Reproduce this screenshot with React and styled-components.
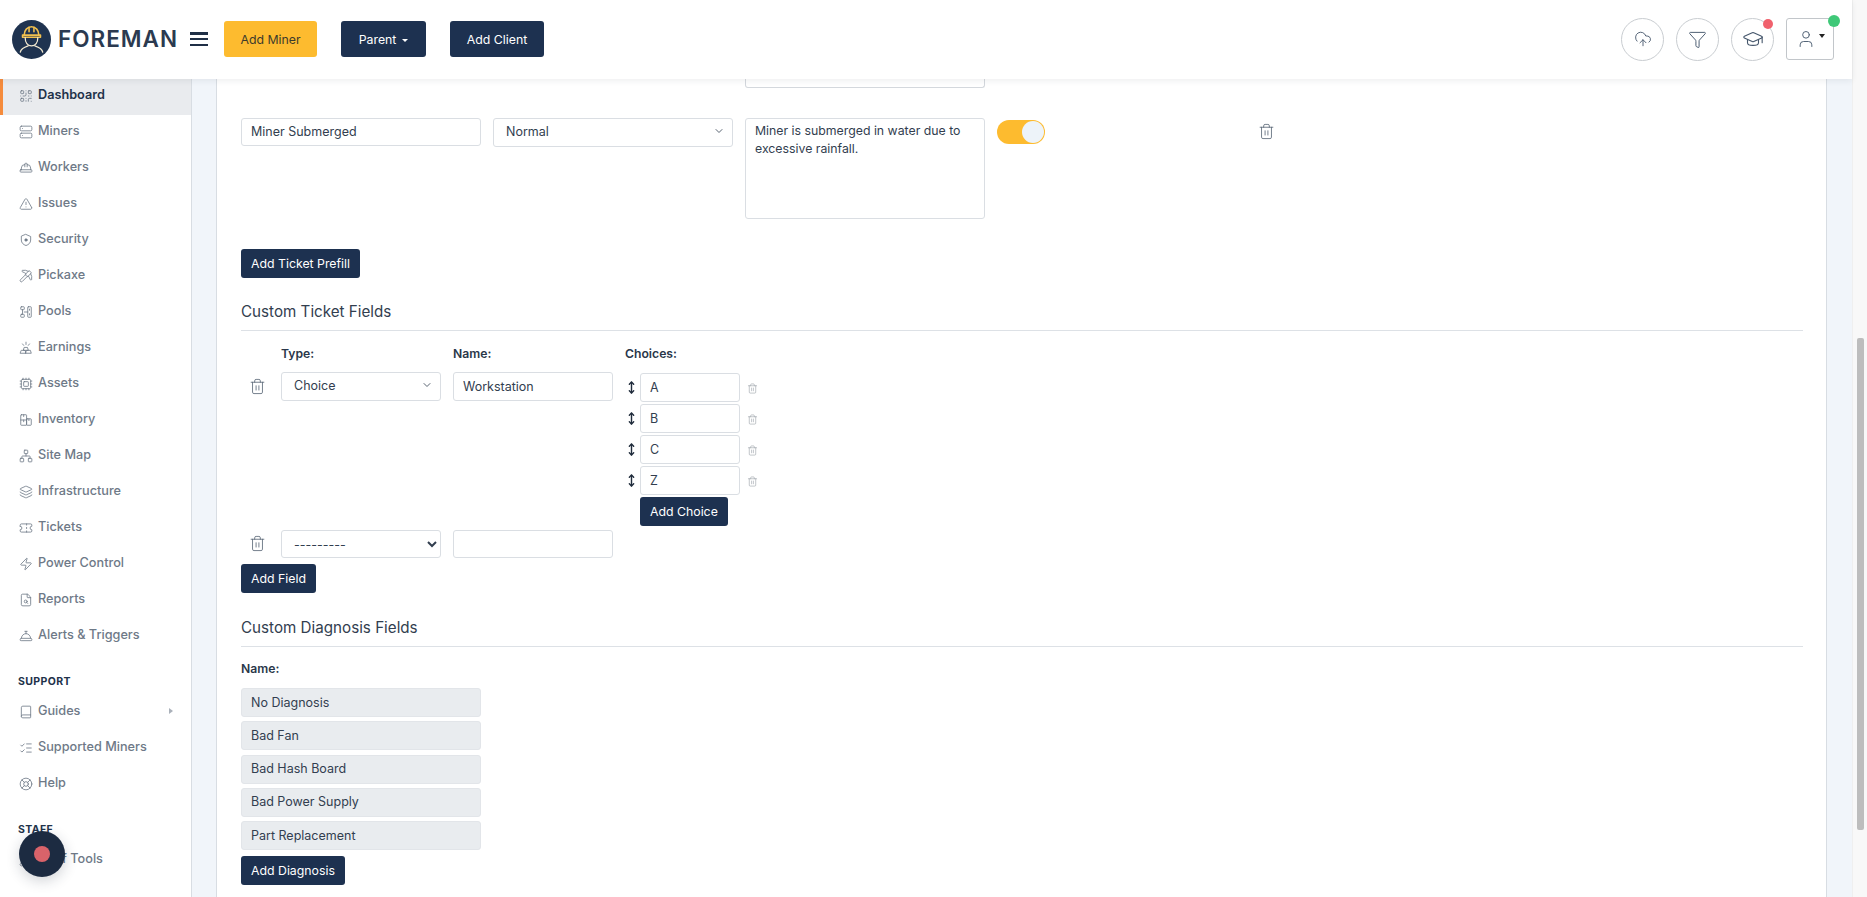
import React from 'react';
import styled, { createGlobalStyle } from 'styled-components';
import {
  QrCode, Server, HardHat, TriangleAlert, Pickaxe, Cpu,
  Network, Layers, Ticket, Zap, FileSearch, ConciergeBell, Book, ListChecks, LifeBuoy,
  CloudUpload, Funnel, GraduationCap, User, Trash2, MoveVertical, ChevronDown, Wrench,
} from 'lucide-react';

const Global = createGlobalStyle`
  html, body { margin: 0; height: 100%; overflow: hidden; background: #fff; }
  body { font-family: Inter, "Noto Sans", "Liberation Sans", sans-serif; font-size: 13px; color: #323e4f; }
  #root { height: 100%; }
  * { box-sizing: border-box; }
`;

const Page = styled.div`display: flex; width: 100%; height: 100vh; overflow: hidden; position: relative;`;
const Shell = styled.div`flex: 1; min-width: 0; display: flex; flex-direction: column;`;
const Track = styled.div`width: 15px; background: #f8f8f8; border-left: 1px solid #efefef; padding: 338px 3px 0 4px;`;
const Thumb = styled.div`height: 492px; background: #bdbdbd; border-radius: 2px;`;

const Header = styled.header`
  height: 79px; flex: none; display: flex; align-items: center; padding: 0 18px 1px 12px;
  background: #fff; box-shadow: 0 2px 6px rgba(40, 50, 70, .08); position: relative; z-index: 2;
`;
const Brand = styled.div`display: flex; align-items: center; gap: 7px;`;
const BrandName = styled.span`font-size: 22.5px; font-weight: 600; letter-spacing: 1px; color: #2b3a50; line-height: 1;`;
const Burger = styled.button`
  border: 0; background: none; padding: 0; margin: 0 16px 0 12px; width: 18px; height: 14px; color: #1f2f46;
  display: flex; flex-direction: column; justify-content: space-between;
`;
const BurgerBar = styled.span`display: block; height: 2.5px; background: currentColor;`;
const HeadButton = styled.button`
  height: 36px; width: ${p => p.$w}px; margin-right: 24px; border: 0; border-radius: 3px; padding: 0;
  background: ${p => (p.$yellow ? '#fdbb2f' : '#1d3150')}; color: ${p => (p.$yellow ? '#3c3a2c' : '#fff')};
  font: 400 12.3px Inter, sans-serif; display: flex; align-items: center; justify-content: center; gap: 6px;
`;
const Caret = styled.i`
  width: 0; height: 0; border-left: 3px solid transparent; border-right: 3px solid transparent;
  border-top: 3.5px solid #fff; margin-top: 2px;
`;
const UserCaret = styled.i`
  width: 0; height: 0; border-left: 3.5px solid transparent; border-right: 3.5px solid transparent;
  border-top: 4px solid #222; margin-top: -6px;
`;
const Tools = styled.div`margin-left: auto; display: flex; align-items: center; gap: 12px;`;
const RoundTool = styled.div`
  width: 43px; height: 43px; border-radius: 50%; border: 1px solid #c9cdd1; position: relative;
  display: flex; align-items: center; justify-content: center; color: #45566b;
`;
const UserTool = styled.div`
  width: 48px; height: 42px; border-radius: 3px; border: 1px solid #c2c6ca; position: relative;
  display: flex; align-items: center; justify-content: center; gap: 3px; color: #45566b; margin-top: -1px;
`;
const Dot = styled.span`
  position: absolute; border-radius: 50%; background: ${p => p.$c}; width: ${p => p.$s}px; height: ${p => p.$s}px;
  top: ${p => p.$t}px; right: ${p => p.$r}px;
`;

const Body = styled.div`flex: 1; min-height: 0; display: flex;`;
const Side = styled.nav`width: 192px; flex: none; background: #fff; border-right: 1px solid #d8dde3; overflow: hidden;`;
const Item = styled.a`
  height: 36px; display: flex; align-items: center; gap: 5px; padding: 0 0 4px 19px; position: relative;
  font-size: 12.7px; line-height: 1; font-weight: ${p => (p.$active ? 600 : 500)};
  color: ${p => (p.$active ? '#22324a' : '#6e7987')};
  background: ${p => (p.$active ? '#e9ebee' : 'transparent')};
  box-shadow: ${p => (p.$active ? 'inset 3px 0 0 #f58b3c' : 'none')};
  svg { flex: none; color: #6e7987; margin-top: 2px; }
`;
const SideHead = styled.div`
  height: 40px; padding: 20px 0 0 18px; font-size: 10.5px; line-height: 14px; font-weight: 700; letter-spacing: .4px; color: #22324a;
`;
const SubCaret = styled.i`
  margin-left: auto; margin-right: 18px; width: 0; height: 0; border-top: 3px solid transparent; border-bottom: 3px solid transparent;
  border-left: 4px solid #aab1ba;
`;
const RecButton = styled.div`
  position: absolute; left: 19px; top: 831px; width: 46px; height: 46px; border-radius: 50%; background: #1c2b41;
  box-shadow: 0 4px 14px rgba(30, 40, 60, .2); display: flex; align-items: center; justify-content: center;
`;
const RecDot = styled.span`width: 16px; height: 16px; border-radius: 50%; background: #d9636a;`;

const Main = styled.main`flex: 1; min-width: 0; background: #f1f5fa; padding: 0 25px 0 24px; overflow: hidden;`;
const Card = styled.section`
  height: 100%; background: #fff; border: solid #d8dde3; border-width: 0 1px; padding: 0 23px 0 24px; overflow: hidden;
`;
const PrefillGrid = styled.div`
  display: grid; grid-template-columns: 240px 240px 240px 249px auto; column-gap: 12px; align-items: start;
  justify-content: start; margin-top: ${p => p.$mt || 0}px;
`;
const field = `
  font: 400 12.5px Inter, sans-serif; color: #323e4f; background: #fff; border: 1px solid #dadee3; border-radius: 3px;
  outline: none; width: 100%; display: block;
`;
const Stub = styled.div`
  grid-column: 3; height: 9px; border: 1px solid #d4d8dd; border-top: 0; border-radius: 0 0 3px 3px;
`;
const TextInput = styled.input`${field} height: ${p => p.$h || 29}px; padding: 0 9px 1px;`;
const Area = styled.textarea`${field} font-size: 12.3px; height: 101px; padding: 3px 9px; line-height: 18px; resize: none; overflow: hidden;`;
const SelectWrap = styled.div`position: relative; color: #5a6573; svg { position: absolute; right: 8px; top: 7px; pointer-events: none; }`;
const PlainSelect = styled.select`${field} height: 29px; padding: 0 12px 2px; appearance: none;`;
const NativeSelect = styled.select`${field} height: 28px; padding: 0 8px;`;
const Toggle = styled.div`
  width: 48px; height: 24px; border-radius: 12px; background: #fdbb2f; margin-top: 2px; display: flex; justify-content: flex-end; padding: 1px;
`;
const Knob = styled.span`width: 22px; height: 22px; border-radius: 50%; background: #edf3f9;`;
const TrashCell = styled.div`color: #5d6a7a; display: flex; padding-top: ${p => p.$pt || 0}px; margin-left: ${p => p.$ml || 0}px;`;

const Btn = styled.button`
  height: 29px; border: 0; border-radius: 3px; background: #1d3150; color: #fff; padding: 0 10px; display: block; white-space: nowrap;
  align-self: flex-start; font: 400 12.3px Inter, sans-serif; margin: ${p => p.$m || 0};
`;
const SectionTitle = styled.h3`
  margin: ${p => p.$mt}px 0 0; padding-bottom: 7px; border-bottom: 1px solid #dde1e6; font-size: 15.2px; line-height: 22px; font-weight: 400; color: #323e4f;
`;
const FieldLabel = styled.label`display: block; font-size: 12.2px; line-height: 18px; font-weight: 600; color: #2a374a; margin-top: ${p => p.$mt || 0}px;`;
const FieldGrid = styled.div`
  display: grid; grid-template-columns: 28px 160px 160px auto; column-gap: 12px; align-items: start; justify-content: start;
  margin-top: ${p => p.$mt}px;
`;
const Choices = styled.div`display: flex; flex-direction: column; gap: 2px; padding-top: 1px;`;
const ChoiceRow = styled.div`display: grid; grid-template-columns: 15px 100px auto; align-items: center; color: #1f2b3b;`;
const SmallTrash = styled.span`margin-left: 7px; color: #9aa1a8; display: flex; padding-top: 2px;`;
const Diagnosis = styled.div`display: grid; grid-template-columns: 240px; row-gap: 4.25px; margin-top: 10px;`;
const Locked = styled.input`${field} height: 29px; padding: 0 9px 1px; background: #e9ecef; border-color: #e2e5e9;`;

const Logo = () => (
  <svg width="39" height="39" viewBox="0 0 40 40">
    <circle cx="20" cy="20" r="20" fill="#1f3350" />
    <g fill="none" stroke="#f2c04e" strokeWidth="1.6" strokeLinecap="round" strokeLinejoin="round">
      <path d="M12.500 15.500c0-5 3.200-8.500 7.500-8.500s7.500 3.500 7.500 8.500" />
      <path d="M17.500 7.500v4.500M22.500 7.500v4.500" />
      <path d="M10.800 15.500h18.400v2.200H10.800z" />
    </g>
    <g fill="none" stroke="#f3ead2" strokeWidth="1.3" strokeLinecap="round" strokeLinejoin="round">
      <path d="M13.500 18c0 5 2.500 8.500 6.500 8.500s6.500-3.500 6.500-8.500" />
      <path d="M8.500 33c.5-3.500 3.500-5 8-6.500M31.500 33c-.5-3.500-3.500-5-8-6.500" />
    </g>
  </svg>
);

const Svg = ({ size, strokeWidth, children }) => (
  <svg width={size} height={size} viewBox="0 0 24 24" fill="none" stroke="currentColor" strokeWidth={strokeWidth} strokeLinecap="round" strokeLinejoin="round">
    {children}
  </svg>
);
const ShieldDot = p => (
  <Svg {...p}>
    <path d="M12 2.500 20 6v6c0 5-3.500 8-8 9.500C7.500 20 4 17 4 12V6z" />
    <circle cx="12" cy="12" r="2" fill="currentColor" />
  </Svg>
);
const PoolsIcon = p => (
  <Svg {...p}>
    <rect x="3" y="3" width="6" height="5" rx="1" /><rect x="3" y="16" width="6" height="5" rx="1" />
    <path d="M6 8v8M9 12h6" />
    <rect x="15" y="3" width="6" height="18" rx="1" /><path d="M18 7v2M18 15v2" />
  </Svg>
);
const GoldIcon = p => (
  <Svg {...p}>
    <path d="M9.500 11h5l1.500 5H8zM4.500 16h6l1.500 5H2.500zM13.500 16h6l1.500 5h-9.500z" />
    <path d="M12 2v4M6 5l2 2.500M18 5l-2 2.500" />
  </Svg>
);
const InventoryIcon = p => (
  <Svg {...p}>
    <rect x="3" y="3" width="10" height="18" rx="1" /><path d="M3 12h10M8 3v3M8 12v3" />
    <rect x="13" y="10" width="8" height="11" rx="1" /><path d="M17 10v3" />
  </Svg>
);

const nav = [
  ['Dashboard', QrCode, true], ['Miners', Server], ['Workers', HardHat], ['Issues', TriangleAlert],
  ['Security', ShieldDot], ['Pickaxe', Pickaxe], ['Pools', PoolsIcon], ['Earnings', GoldIcon], ['Assets', Cpu],
  ['Inventory', InventoryIcon], ['Site Map', Network], ['Infrastructure', Layers], ['Tickets', Ticket],
  ['Power Control', Zap], ['Reports', FileSearch], ['Alerts & Triggers', ConciergeBell],
];

const NavItem = ({ label, Icon, active, children }) => (
  <Item $active={active}><Icon size={14} strokeWidth={1.4} />{label}{children}</Item>
);

const Trash = () => <Trash2 size={17} strokeWidth={1.2} />;

export default function App() {
  return (
    <Page>
      <Global />
      <Shell>
        <Header>
          <Brand><Logo /><BrandName>FOREMAN</BrandName></Brand>
          <Burger><BurgerBar /><BurgerBar /><BurgerBar /></Burger>
          <HeadButton $yellow $w={93}>Add Miner</HeadButton>
          <HeadButton $w={85}>Parent <Caret /></HeadButton>
          <HeadButton $w={94}>Add Client</HeadButton>
          <Tools>
            <RoundTool><CloudUpload size={18} strokeWidth={1.2} /></RoundTool>
            <RoundTool><Funnel size={19} strokeWidth={1.2} /></RoundTool>
            <RoundTool><GraduationCap size={22} strokeWidth={1.2} /><Dot $c="#f0616d" $s={10} $t={0} $r={0} /></RoundTool>
            <UserTool><User size={20} strokeWidth={1.1} /><UserCaret /><Dot $c="#3fc878" $s={12} $t={-4} $r={-7} /></UserTool>
          </Tools>
        </Header>
        <Body>
          <Side>
            {nav.map(([label, Icon, active]) => <NavItem key={label} label={label} Icon={Icon} active={active} />)}
            <SideHead>SUPPORT</SideHead>
            <NavItem label="Guides" Icon={Book}><SubCaret /></NavItem>
            <NavItem label="Supported Miners" Icon={ListChecks} />
            <NavItem label="Help" Icon={LifeBuoy} />
            <SideHead>STAFF</SideHead>
            <NavItem label="Staff Tools" Icon={Wrench} />
          </Side>
          <Main>
            <Card>
              <PrefillGrid><Stub /></PrefillGrid>
              <PrefillGrid $mt={30}>
                <TextInput $h={28} readOnly value="Miner Submerged" />
                <SelectWrap>
                  <PlainSelect defaultValue="Normal"><option>Normal</option></PlainSelect>
                  <ChevronDown size={12} strokeWidth={2} />
                </SelectWrap>
                <Area readOnly value="Miner is submerged in water due to excessive rainfall." />
                <Toggle><Knob /></Toggle>
                <TrashCell $pt={5}><Trash /></TrashCell>
              </PrefillGrid>
              <Btn $m="30px 0 0">Add Ticket Prefill</Btn>

              <SectionTitle $mt={23}>Custom Ticket Fields</SectionTitle>
              <FieldGrid $mt={14}>
                <span />
                <FieldLabel>Type:</FieldLabel>
                <FieldLabel>Name:</FieldLabel>
                <FieldLabel>Choices:</FieldLabel>
              </FieldGrid>
              <FieldGrid $mt={9}>
                <TrashCell $pt={6} $ml={8}><Trash /></TrashCell>
                <SelectWrap>
                  <PlainSelect defaultValue="Choice"><option>Choice</option></PlainSelect>
                  <ChevronDown size={12} strokeWidth={2} />
                </SelectWrap>
                <TextInput readOnly value="Workstation" />
                <Choices>
                  {['A', 'B', 'C', 'Z'].map(v => (
                    <ChoiceRow key={v}>
                      <MoveVertical size={13} strokeWidth={2.6} />
                      <TextInput readOnly value={v} />
                      <SmallTrash><Trash2 size={11} strokeWidth={1.3} /></SmallTrash>
                    </ChoiceRow>
                  ))}
                  <Btn $m="0 0 0 15px">Add Choice</Btn>
                </Choices>
              </FieldGrid>
              <FieldGrid $mt={4}>
                <TrashCell $pt={5} $ml={8}><Trash /></TrashCell>
                <NativeSelect defaultValue="---------"><option>---------</option></NativeSelect>
                <TextInput $h={28} readOnly value="" />
              </FieldGrid>
              <Btn $m="6px 0 0">Add Field</Btn>

              <SectionTitle $mt={24}>Custom Diagnosis Fields</SectionTitle>
              <FieldLabel $mt={13}>Name:</FieldLabel>
              <Diagnosis>
                {['No Diagnosis', 'Bad Fan', 'Bad Hash Board', 'Bad Power Supply', 'Part Replacement'].map(v => (
                  <Locked key={v} readOnly value={v} />
                ))}
              </Diagnosis>
              <Btn $m="6px 0 0">Add Diagnosis</Btn>
            </Card>
          </Main>
        </Body>
      </Shell>
      <Track><Thumb /></Track>
      <RecButton><RecDot /></RecButton>
    </Page>
  );
}
